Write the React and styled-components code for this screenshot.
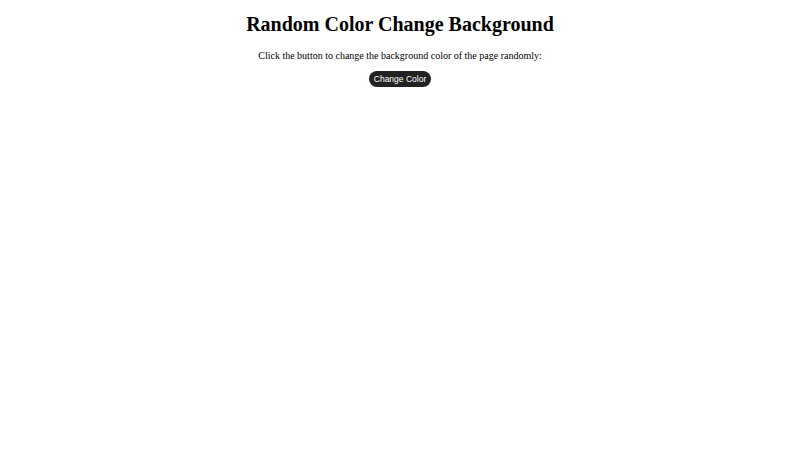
import React, { useState } from "react";
import styled, { createGlobalStyle } from "styled-components";

const GlobalStyle = createGlobalStyle`
  html, body {
    margin: 0;
    padding: 0;
  }

  body {
    font-family: "Liberation Serif", "Times New Roman", serif;
    color: #000;
    transition: background-color 0.3s;
  }
`;

const Page = styled.main`
  display: flex;
  flex-direction: column;
  align-items: center;
  padding-top: 12px;
  text-align: center;
`;

const Title = styled.h1`
  margin: 0;
  font-size: 20px;
  font-weight: 700;
  line-height: 24px;
`;

const Description = styled.p`
  margin: 14px 0 9px;
  font-size: 10px;
  line-height: 12px;
`;

const Button = styled.button`
  padding: 0 5px;
  height: 16px;
  border: none;
  border-radius: 8px;
  background: #222;
  color: #fff;
  font-family: "Liberation Sans", Arial, sans-serif;
  font-size: 8.5px;
  cursor: pointer;
`;

const randomColor = () =>
  "#" + Math.floor(Math.random() * 0xffffff).toString(16).padStart(6, "0");

export default function App() {
  const [bg, setBg] = useState("#fff");

  return (
    <>
      <GlobalStyle />
      <Page style={{ backgroundColor: bg }}>
        <Title>Random Color Change Background</Title>
        <Description>
          Click the button to change the background color of the page randomly:
        </Description>
        <Button onClick={() => setBg(randomColor())}>Change Color</Button>
      </Page>
    </>
  );
}
